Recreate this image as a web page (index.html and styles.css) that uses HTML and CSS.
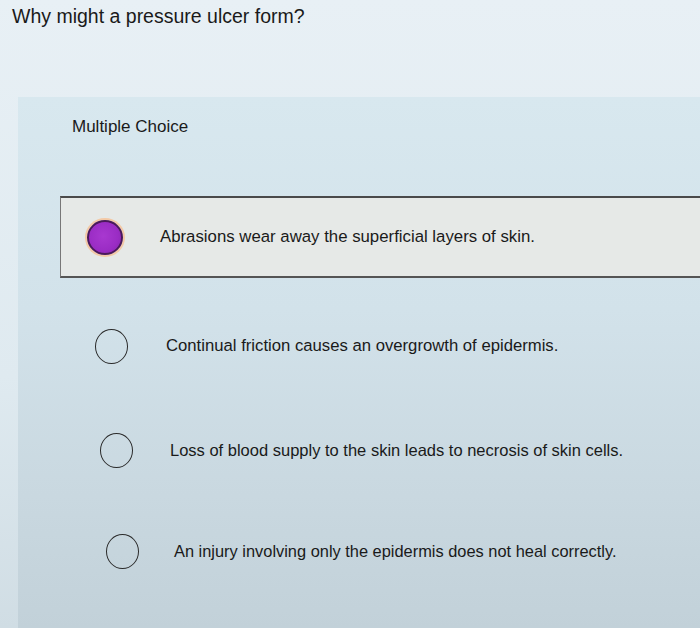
FILE: index.html
```html
<!DOCTYPE html>
<html>
<head>
<meta charset="utf-8">
<link rel="stylesheet" href="styles.css">
</head>
<body>
<header class="top">
  <h1 class="question">Why might a pressure ulcer form?</h1>
</header>
<section class="panel">
  <p class="label">Multiple Choice</p>
  <ul class="options">
    <li class="option selected"><span class="radio"></span><span class="text">Abrasions wear away the superficial layers of skin.</span></li>
    <li class="option"><span class="radio"></span><span class="text">Continual friction causes an overgrowth of epidermis.</span></li>
    <li class="option"><span class="radio"></span><span class="text">Loss of blood supply to the skin leads to necrosis of skin cells.</span></li>
    <li class="option"><span class="radio"></span><span class="text">An injury involving only the epidermis does not heal correctly.</span></li>
  </ul>
</section>
</body>
</html>
```
FILE: styles.css
```css
html, body {
  margin: 0;
  padding: 0;
}
body {
  width: 700px;
  height: 628px;
  overflow: hidden;
  background: linear-gradient(180deg, #e8f0f5 0%, #dfeaf0 60%, #d0dde4 100%);
  font-family: "Liberation Sans", Arial, sans-serif;
  color: #1a1a1a;
}
.top {
  height: 97px;
  padding-left: 12px;
  box-sizing: border-box;
}
.question {
  margin: 0;
  padding-top: 4px;
  font-size: 19.5px;
  font-weight: normal;
  line-height: 24px;
  color: #1a1a1a;
}
.panel {
  margin-left: 18px;
  height: 531px;
  background: linear-gradient(180deg, #d8e8ef 0%, #d2e2ea 40%, #c9d8e0 75%, #c2d1d9 100%);
  box-sizing: border-box;
  padding-top: 19px;
}
.label {
  margin: 0 0 0 54px;
  font-size: 17px;
  line-height: 21px;
  color: #1a1a1a;
}
.options {
  list-style: none;
  margin: 59px 0 0 42px;
  padding: 0;
  display: flex;
  flex-direction: column;
}
.option {
  display: flex;
  align-items: center;
  height: 80px;
  gap: 37px;
  font-size: 16.5px;
  color: #1a1a1a;
}
.option.selected {
  background: #e6e9e7;
  border-top: 2px solid #4a4a4a;
  border-bottom: 2px solid #555;
  border-left: 1px solid #777;
  height: 78px;
  padding-left: 26px;
  gap: 37px;
  font-size: 16.8px;
}
.option:nth-child(2) { margin-top: 28px; padding-left: 35px; gap: 38px; font-size: 16.7px; }
.option:nth-child(3) { margin-top: 24px; padding-left: 40px; }
.option:nth-child(4) { margin-top: 21px; padding-left: 46px; gap: 35px; font-size: 16.4px; }
.radio {
  flex: none;
  width: 31px;
  height: 33px;
  border: 1.5px solid #2a2a2a;
  border-radius: 50%;
}
.selected .radio {
  width: 32px;
  height: 31px;
  border: 2px solid #4a1a5a;
  background: radial-gradient(circle at 45% 45%, #a838d0 0%, #9a2cc4 60%, #7d24a6 100%);
  box-shadow: 0 0 0 2px #f3c9a6;
}
.text {
  white-space: nowrap;
}
```
